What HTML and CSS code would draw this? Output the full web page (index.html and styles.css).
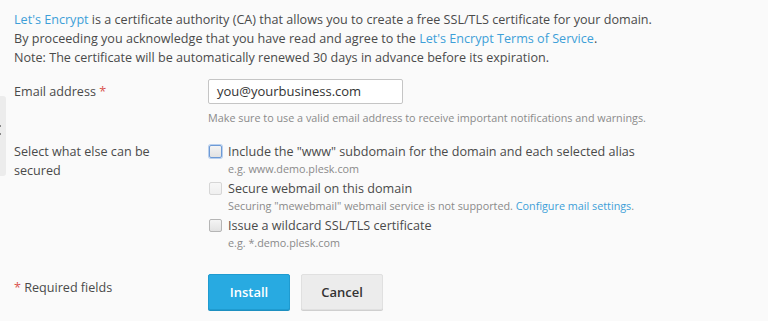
FILE: index.html
```html
<!DOCTYPE html>
<html lang="en">
<head>
<meta charset="utf-8">
<link rel="stylesheet" href="styles.css">
</head>
<body>
<div class="side-tab"><span class="side-arrow"></span></div>
<div class="page">
  <div class="intro">
    <div><a href="#" class="link">Let's Encrypt</a> is a certificate authority (CA) that allows you to create a free SSL/TLS certificate for your domain.</div>
    <div>By proceeding you acknowledge that you have read and agree to the <a href="#" class="link">Let's Encrypt Terms of Service</a>.</div>
    <div>Note: The certificate will be automatically renewed 30 days in advance before its expiration.</div>
  </div>

  <div class="row row-email">
    <div class="label">Email address <span class="req">*</span></div>
    <div class="field">
      <div class="input">you@yourbusiness.com</div>
      <div class="hint">Make sure to use a valid email address to receive important notifications and warnings.</div>
    </div>
  </div>

  <div class="row row-secure">
    <div class="label">Select what else can be secured</div>
    <div class="field options">
      <div class="option">
        <span class="cb cb-focus"></span>
        <div class="opt-text">
          <div class="opt-label">Include the "www" subdomain for the domain and each selected alias</div>
          <div class="hint">e.g. www.demo.plesk.com</div>
        </div>
      </div>
      <div class="option">
        <span class="cb cb-disabled"></span>
        <div class="opt-text">
          <div class="opt-label">Secure webmail on this domain</div>
          <div class="hint">Securing "mewebmail" webmail service is not supported. <a href="#" class="link">Configure mail settings</a>.</div>
        </div>
      </div>
      <div class="option">
        <span class="cb"></span>
        <div class="opt-text">
          <div class="opt-label">Issue a wildcard SSL/TLS certificate</div>
          <div class="hint">e.g. *.demo.plesk.com</div>
        </div>
      </div>
    </div>
  </div>

  <div class="row row-buttons">
    <div class="label required-note"><span class="req">*</span> Required fields</div>
    <div class="field buttons">
      <button class="btn btn-primary">Install</button>
      <button class="btn btn-default">Cancel</button>
    </div>
  </div>
</div>
</body>
</html>
```

FILE: styles.css
```css
html, body {
  margin: 0;
  padding: 0;
  background: #fafafa;
}
body {
  font-family: "Open Sans", "DejaVu Sans", sans-serif;
  font-size: 12.6px;
  color: #4a4a4a;
  width: 768px;
  height: 321px;
  overflow: hidden;
  position: relative;
}
.side-tab {
  position: absolute;
  left: 0;
  top: 96px;
  width: 6px;
  height: 80px;
  background: #ececec;
  border-radius: 0 3px 3px 0;
}
.side-arrow {
  position: absolute;
  left: 0;
  top: 29px;
  width: 1px;
  height: 6px;
  border-top: 2px solid #888;
  border-bottom: 2px solid #888;
}
.page {
  padding: 10px 14px 0 14px;
}
.link {
  color: #3d9fd8;
  text-decoration: none;
}
.intro {
  line-height: 19px;
}
.row {
  display: flex;
}
.label {
  width: 194px;
  flex: none;
  line-height: 19px;
}
.req {
  color: #d9534f;
}
.field {
  flex: 1;
}
.row-email {
  margin-top: 12px;
}
.row-email .label {
  padding-top: 3px;
}
.input {
  width: 185px;
  height: 23px;
  border: 1px solid #c5c5c5;
  border-radius: 2px;
  background: #fff;
  padding: 0 0 0 8px;
  line-height: 23px;
  font-size: 13px;
  color: #333;
}
.hint {
  font-size: 10.8px;
  line-height: 15px;
  color: #8a8a8a;
}
.row-email .hint {
  margin-top: 6px;
}
.row-secure {
  margin-top: 17px;
}
.row-secure .label {
  width: 170px;
  margin-right: 24px;
}
.options {
  display: flex;
  flex-direction: column;
  gap: 3px;
}
.option {
  display: flex;
  align-items: flex-start;
}
.cb {
  width: 11px;
  height: 11px;
  flex: none;
  margin: 3px 6px 0 1px;
  border: 1px solid #b5b5b5;
  border-radius: 2px;
  background: linear-gradient(#f4f4f4, #e2e2e2);
}
.cb-focus {
  border-color: #6d9ad6;
  box-shadow: 0 0 0 1px #b9d0ee;
}
.cb-disabled {
  border-color: #d6d6d6;
  background: linear-gradient(#f7f7f7, #efefef);
}
.opt-label {
  line-height: 19px;
}
.opt-text .hint {
  line-height: 15px;
}
.row-buttons {
  margin-top: 24px;
}
.required-note {
  padding-top: 4px;
}
.buttons {
  display: flex;
  gap: 11px;
}
.btn {
  font-family: "Open Sans", "DejaVu Sans", sans-serif;
  font-size: 13px;
  height: 36px;
  width: 82px;
  border-radius: 2px;
  cursor: pointer;
}
.btn-primary {
  background: #28aae1;
  color: #fff;
  font-weight: 600;
  border: 1px solid #1f9bd0;
  box-shadow: 0 1px 0 #1c8fc0;
}
.btn-default {
  background: #ececec;
  color: #333;
  font-weight: 600;
  border: 1px solid #e0e0e0;
  box-shadow: 0 1px 0 #cfcfcf;
}
```
